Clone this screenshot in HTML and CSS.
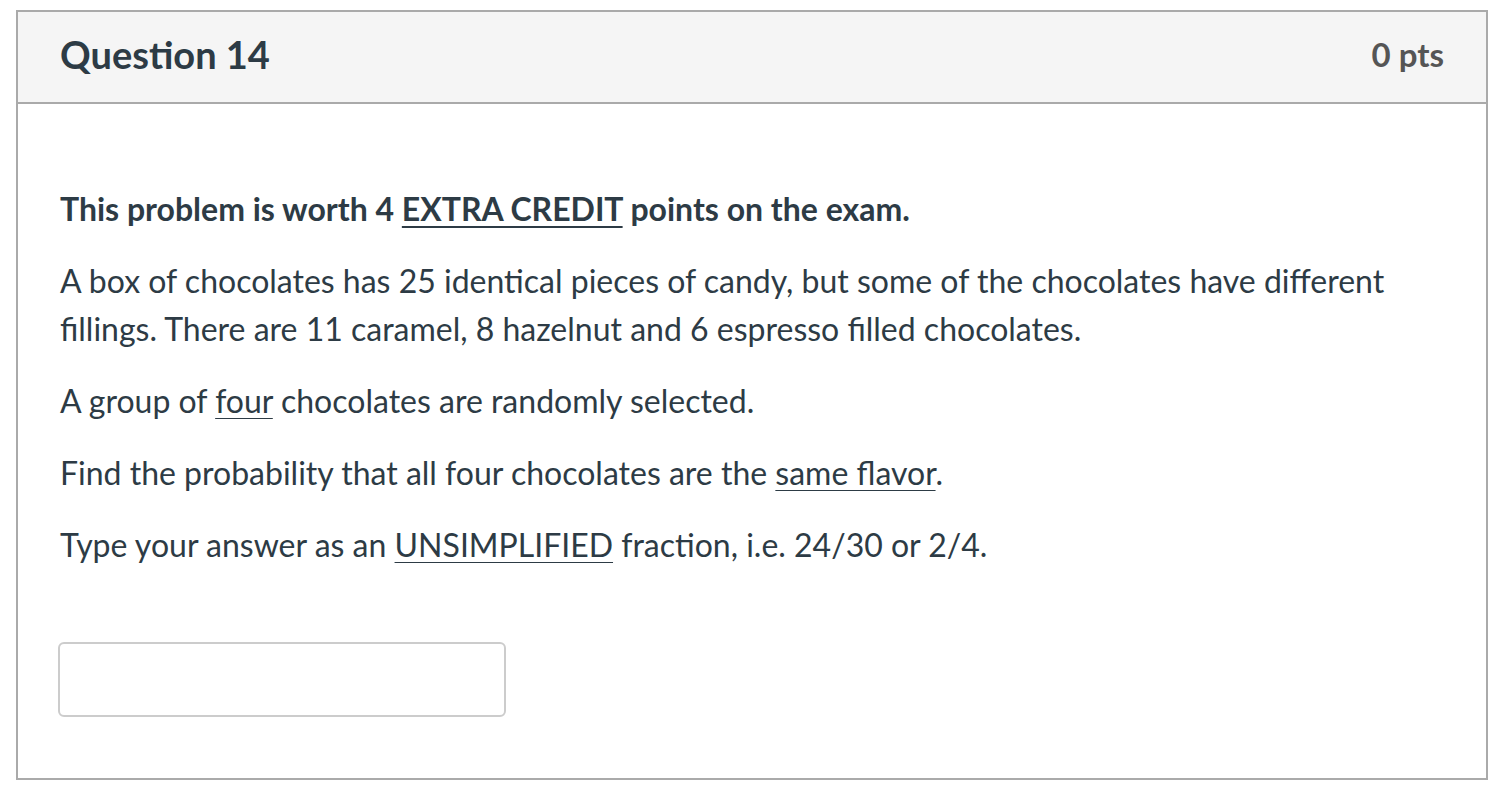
FILE: index.html
```html
<!DOCTYPE html>
<html>
<head>
<meta charset="utf-8">
<link rel="stylesheet" href="styles.css">
</head>
<body>
<div class="question">
  <div class="header">
    <h2 class="name">Question 14</h2>
    <span class="pts">0 pts</span>
  </div>
  <div class="content">
    <p class="lead"><strong>This problem is worth 4 <u>EXTRA CREDIT</u> points on the exam.</strong></p>
    <p>A box of chocolates has 25 identical pieces of candy, but some of the chocolates have different fillings. There are 11 caramel, 8 hazelnut and 6 espresso filled chocolates.</p>
    <p>A group of <u>four</u> chocolates are randomly selected.</p>
    <p>Find the probability that all four chocolates are the <u>same flavor</u>.</p>
    <p>Type your answer as an <u>UNSIMPLIFIED</u> fraction, i.e. 24/30 or 2/4.</p>
    <div class="answer"><input type="text" class="answer-input"></div>
  </div>
</div>
</body>
</html>
```
FILE: styles.css
```css
html, body {
  margin: 0;
  padding: 0;
  background: #ffffff;
}
body {
  padding: 10px 8px 0 16px;
  font-family: Lato, "Open Sans", sans-serif;
  color: #2d3b45;
}
.question {
  width: 1468px;
  border: 2px solid #aaaaaa;
  box-sizing: content-box;
}
.header {
  display: flex;
  justify-content: space-between;
  align-items: center;
  height: 84px;
  padding: 0 42px 6px 42px;
  background: #f5f5f5;
  border-bottom: 2px solid #aaaaaa;
}
.name {
  margin: 0;
  font-size: 38px;
  font-weight: 700;
  color: #2d3b45;
}
.pts {
  font-size: 33px;
  font-weight: 700;
  color: #555555;
}
.content {
  padding: 81px 42px 61px 42px;
  font-size: 32px;
  line-height: 48px;
}
.content p {
  margin: 0 0 24px 0;
}
.content u {
  text-decoration-thickness: 1px;
  text-underline-offset: 5px;
}
.content strong u {
  text-decoration-thickness: 2px;
}
.answer {
  padding-top: 49px;
}
.answer-input {
  display: block;
  width: 448px;
  height: 75px;
  box-sizing: border-box;
  border: 2px solid #cccccc;
  border-radius: 6px;
  background: #ffffff;
  margin: 0 0 0 -2px;
  padding: 0;
}
```
